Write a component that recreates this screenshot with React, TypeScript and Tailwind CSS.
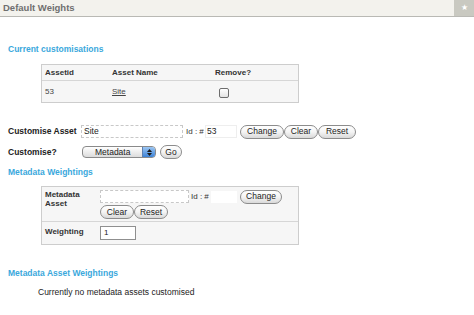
import React from "react";

function Btn({ label, w }: { label: string; w: string }) {
  return (
    <div
      className={`${w} h-[14px] shrink-0 rounded-full border border-[#8c8c8c] bg-linear-to-b from-white via-[#f4f4f4] to-[#d9d9d9] flex items-center justify-center text-[8.5px] leading-none text-[#222]`}
    >
      {label}
    </div>
  );
}

export default function App() {
  return (
    <div
      className="w-[474px] h-[315px] bg-white overflow-hidden text-[#222]"
      style={{ fontFamily: '"Liberation Sans", Arial, sans-serif' }}
    >
      {/* Header */}
      <div className="h-[17px] bg-[#f3f2ed] border-b border-[#b9b9b4] flex items-stretch">
        <div className="flex-1 pl-[3px] flex items-center text-[9.5px] font-bold text-[#6f6f6f]">
          Default Weights
        </div>
        <div className="w-[20px] bg-[#c9c9c1] flex items-center justify-center text-white text-[8px] leading-none">
          ★
        </div>
      </div>

      <div className="pl-[8px]">
        {/* Current customisations */}
        <div className="mt-[27px] h-[10px] flex items-center text-[8.5px] font-bold text-[#3aa8dc]">
          Current customisations
        </div>

        <div className="mt-[10px] ml-[33px] w-[258px] border border-[#cdcdcd] bg-[#f6f6f6] text-[8px]">
          <div className="h-[16px] flex items-center border-b border-[#d6d6d6] font-bold text-[#333]">
            <div className="w-[70px] pl-[3px]">Assetid</div>
            <div className="w-[103px]">Asset Name</div>
            <div>Remove?</div>
          </div>
          <div className="h-[21px] flex items-center text-[#444]">
            <div className="w-[70px] pl-[3px]">53</div>
            <div className="w-[107px] underline">Site</div>
            <div className="w-[10px] h-[10px] mt-[3px] rounded-[2px] border border-[#6d6d6d] bg-linear-to-b from-white to-[#e4e4e4]" />
          </div>
        </div>

        {/* Customise Asset */}
        <div className="mt-[21px] h-[15px] flex items-center">
          <div className="w-[73px] text-[8.5px] font-bold text-[#222]">Customise Asset</div>
          <div className="w-[102px] h-[13px] border border-dashed border-[#c8c8c8] bg-white flex items-center pl-[2px] text-[8.5px]">
            Site
          </div>
          <div className="ml-[3px] w-[19px] text-[8px] text-[#333]">Id : #</div>
          <div className="w-[32px] h-[13px] border border-[#eeeeee] bg-white flex items-center pl-[1px] text-[8.5px]">
            53
          </div>
          <div className="ml-[3px] flex">
            <Btn label="Change" w="w-[44px]" />
            <Btn label="Clear" w="w-[34px]" />
            <Btn label="Reset" w="w-[38px]" />
          </div>
        </div>

        {/* Customise? */}
        <div className="mt-[6px] h-[14px] flex items-center">
          <div className="w-[74px] text-[8.5px] font-bold text-[#222]">Customise?</div>
          <div className="w-[74px] h-[12px] rounded-[4px] border border-[#8a8a8a] bg-linear-to-b from-white to-[#dcdcdc] flex items-stretch overflow-hidden">
            <div className="flex-1 flex items-center pl-[12px] text-[8.5px] leading-none">Metadata</div>
            <div className="w-[13px] bg-linear-to-b from-[#9cc6f2] to-[#3b82d6] border-l border-[#5b7fb0] flex flex-col items-center justify-center gap-[1px]">
              <svg width="5" height="3" viewBox="0 0 5 3"><path d="M0 3 L2.5 0 L5 3 Z" fill="#1a1a1a" /></svg>
              <svg width="5" height="3" viewBox="0 0 5 3"><path d="M0 0 L2.5 3 L5 0 Z" fill="#1a1a1a" /></svg>
            </div>
          </div>
          <div className="ml-[4px]">
            <Btn label="Go" w="w-[22px]" />
          </div>
        </div>

        {/* Metadata Weightings */}
        <div className="mt-[8px] h-[10px] flex items-center text-[8.5px] font-bold text-[#3aa8dc]">
          Metadata Weightings
        </div>

        <div className="mt-[9px] ml-[33px] w-[258px] border border-[#cdcdcd] bg-[#f6f6f6] text-[8px]">
          <div className="h-[35px] flex border-b border-[#d6d6d6]">
            <div className="w-[58px] pl-[3px] pt-[3px] font-bold text-[#333] leading-[9px]">
              Metadata
              <br />
              Asset
            </div>
            <div className="pt-[3px]">
              <div className="flex items-center h-[13px]">
                <div className="w-[89px] h-[13px] border border-dashed border-[#c8c8c8] bg-white" />
                <div className="ml-[2px] w-[20px] text-[8px] text-[#333]">Id : #</div>
                <div className="w-[26px] h-[12px] bg-white" />
                <div className="ml-[3px]">
                  <Btn label="Change" w="w-[42px]" />
                </div>
              </div>
              <div className="mt-[2px] flex">
                <Btn label="Clear" w="w-[34px]" />
                <Btn label="Reset" w="w-[34px]" />
              </div>
            </div>
          </div>
          <div className="h-[22px] flex items-center">
            <div className="w-[58px] pl-[3px] font-bold text-[#333] -mt-[3px]">Weighting</div>
            <div className="w-[36px] h-[14px] border border-[#8f8f8f] bg-white flex items-center pl-[3px] text-[8px]">
              1
            </div>
          </div>
        </div>

        {/* Metadata Asset Weightings */}
        <div className="mt-[23px] h-[10px] flex items-center text-[8.5px] font-bold text-[#3aa8dc]">
          Metadata Asset Weightings
        </div>
        <div className="mt-[9px] ml-[30px] h-[10px] flex items-center text-[8.5px] text-[#222]">
          Currently no metadata assets customised
        </div>
      </div>
    </div>
  );
}
